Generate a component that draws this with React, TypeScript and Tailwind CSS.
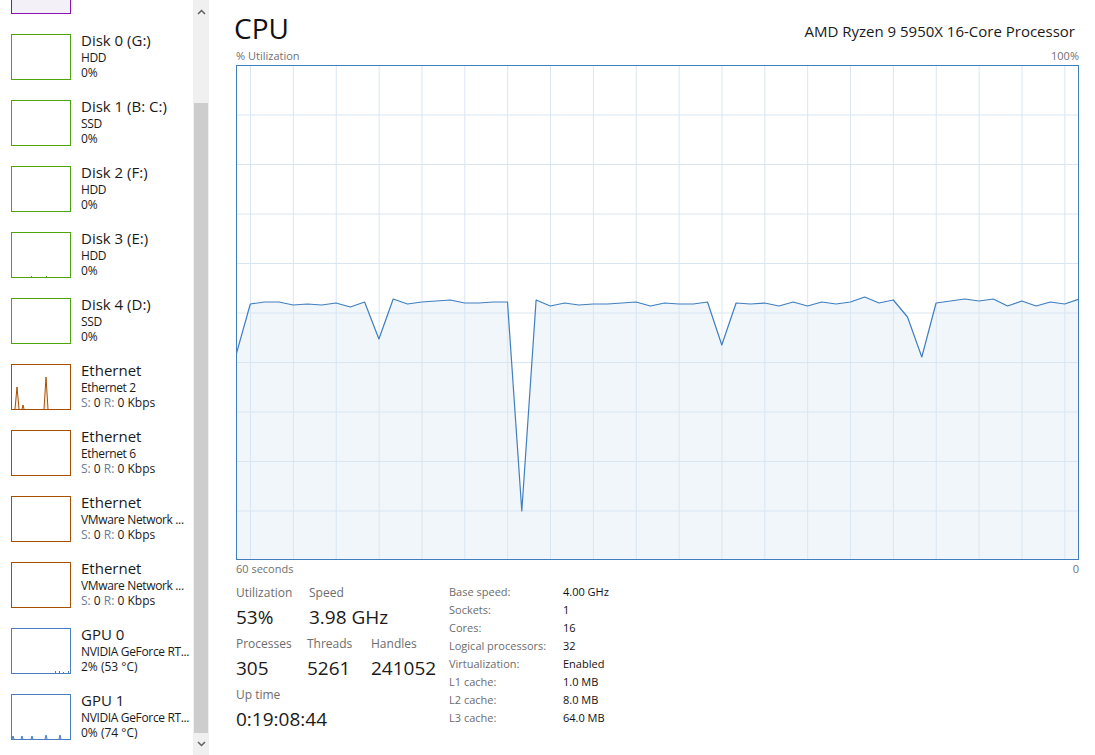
import React from "react";

const FONT = { fontFamily: '"Open Sans", "Noto Sans", sans-serif' };

// y values (screen px) sampled from the utilization graph, 60 points across
const CPU_Y = [
  355, 304, 302, 302, 305, 304, 305, 303, 307, 302,
  339, 299, 304, 302, 301, 300, 303, 303, 302, 302,
  511, 300, 306, 303, 305, 304, 304, 303, 302, 306,
  303, 304, 304, 302, 345, 303, 304, 303, 306, 302,
  306, 302, 304, 302, 297, 303, 300, 317, 357, 303,
  301, 299, 301, 299, 306, 301, 306, 302, 304, 299,
];

type Item = {
  title: string;
  sub: string;
  stat: React.ReactNode;
  color: string;
  fill?: string;
  spark?: React.ReactNode;
  noText?: boolean;
};

const kbps = (
  <>
    <span className="text-[#6b7a99]">S:</span> 0 <span className="text-[#6b7a99]">R:</span> 0 Kbps
  </>
);

const items: Item[] = [
  { title: "Memory", sub: "", stat: "", color: "#8b12ae", fill: "#f4f0f7", noText: true },
  { title: "Disk 0 (G:)", sub: "HDD", stat: "0%", color: "#4da60c" },
  { title: "Disk 1 (B: C:)", sub: "SSD", stat: "0%", color: "#4da60c" },
  { title: "Disk 2 (F:)", sub: "HDD", stat: "0%", color: "#4da60c" },
  {
    title: "Disk 3 (E:)",
    sub: "HDD",
    stat: "0%",
    color: "#4da60c",
    spark: (
      <>
        <rect x="19" y="43" width="1" height="1" fill="#4da60c" />
        <rect x="34" y="43" width="1" height="1" fill="#4da60c" />
      </>
    ),
  },
  { title: "Disk 4 (D:)", sub: "SSD", stat: "0%", color: "#4da60c" },
  {
    title: "Ethernet",
    sub: "Ethernet 2",
    stat: kbps,
    color: "#a74f01",
    spark: (
      <g fill="#fcefe2" stroke="#a74f01" strokeWidth="1">
        <polyline points="3,44 5,22 7,44" />
        <polyline points="10,44 11,40 12,44" />
        <polyline points="32,44 34,12 36,44" />
      </g>
    ),
  },
  { title: "Ethernet", sub: "Ethernet 6", stat: kbps, color: "#a74f01" },
  { title: "Ethernet", sub: "VMware Network ...", stat: kbps, color: "#a74f01" },
  { title: "Ethernet", sub: "VMware Network ...", stat: kbps, color: "#a74f01" },
  {
    title: "GPU 0",
    sub: "NVIDIA GeForce RT...",
    stat: "2% (53 °C)",
    color: "#4a7ebf",
    spark: (
      <g fill="#4a7ebf">
        <rect x="43" y="42" width="1" height="2" />
        <rect x="47" y="42" width="1" height="2" />
        <rect x="51" y="43" width="1" height="1" />
        <rect x="56" y="42" width="1" height="2" />
      </g>
    ),
  },
  {
    title: "GPU 1",
    sub: "NVIDIA GeForce RT...",
    stat: "0% (74 °C)",
    color: "#4a7ebf",
    spark: (
      <g fill="#c9dbef" stroke="#4a7ebf" strokeWidth="1">
        <polyline points="0,44 1,41 2,44" />
        <polyline points="9,44 10,41 11,44" />
        <polyline points="19,44 20,41 21,44" />
        <polyline points="33,44 34,40 35,44" />
        <polyline points="47,44 48,40 49,44" />
      </g>
    ),
  },
];

function SideItem({ item }: { item: Item }) {
  return (
    <div className="flex h-[66px] items-start pl-[11px] pt-[8px]">
      <div
        className="h-[46px] w-[60px] shrink-0 border"
        style={{ borderColor: item.color, background: item.fill ?? "#ffffff" }}
      >
        <svg width="58" height="44" viewBox="0 0 58 44" className="block">
          {item.spark}
        </svg>
      </div>
      {!item.noText && (
        <div className="-mt-[4px] ml-[10px] min-w-0 text-[#1a1a1a]">
          <div className="whitespace-nowrap text-[15px] leading-[20px]">{item.title}</div>
          <div className="whitespace-nowrap text-[12px] leading-[16px] tracking-[-0.35px]">{item.sub}</div>
          <div className="whitespace-nowrap text-[12px] leading-[14px]">{item.stat}</div>
        </div>
      )}
    </div>
  );
}

function Sidebar() {
  return (
    <div className="flex h-[755px] w-[209px] shrink-0">
      <div className="h-full w-[193px] overflow-hidden bg-white">
        <div className="-mt-[40px]">
          {items.map((it, i) => (
            <SideItem key={i} item={it} />
          ))}
        </div>
      </div>
      <div className="flex h-full w-[16px] flex-col bg-[#f0f0f0]">
        <div className="flex h-[24px] items-center justify-center">
          <svg width="9" height="6" viewBox="0 0 9 6">
            <polyline points="1,5 4.5,1.5 8,5" fill="none" stroke="#606060" strokeWidth="1.5" />
          </svg>
        </div>
        <div className="mx-[1px] mt-[79px] flex-1 bg-[#cdcdcd]" />
        <div className="flex h-[22px] items-center justify-center">
          <svg width="9" height="6" viewBox="0 0 9 6">
            <polyline points="1,1 4.5,4.5 8,1" fill="none" stroke="#606060" strokeWidth="1.5" />
          </svg>
        </div>
      </div>
    </div>
  );
}

function CpuChart() {
  const W = 843;
  const H = 494;
  const step = W / 59;
  const pts = CPU_Y.map((y, i) => `${(i * step).toFixed(1)},${y - 65}`);
  const line = pts.join(" ");
  const area = `0,${H} ${line} ${W},${H}`;
  const vLines = Array.from({ length: 20 }, (_, k) => 14 + k * 42.86);
  const hLines = Array.from({ length: 9 }, (_, k) => (k + 1) * 49.5);
  return (
    <svg width={W} height={H + 1} viewBox={`0 0 ${W} ${H + 1}`} className="block">
      <rect x="0" y="0" width={W} height={H + 1} fill="#ffffff" />
      <polygon points={area} fill="#f1f6fa" />
      {vLines.map((x, i) => (
        <line key={`v${i}`} x1={x + 0.5} y1="0" x2={x + 0.5} y2={H} stroke="#d9e6f2" strokeWidth="1" />
      ))}
      {hLines.map((y, i) => (
        <line key={`h${i}`} x1="0" y1={y + 0.5} x2={W} y2={y + 0.5} stroke="#d9e6f2" strokeWidth="1" />
      ))}
      <polyline points={line} fill="none" stroke="#3f7fc0" strokeWidth="1.2" strokeLinejoin="round" />
      <rect x="0.5" y="0.5" width={W - 1} height={H} fill="none" stroke="#3f7fc0" strokeWidth="1" />
    </svg>
  );
}

function Stat({ label, value, w }: { label: string; value: string; w: string }) {
  return (
    <div className={w}>
      <div className="text-[12px] leading-[16px] text-[#6d6d6d]">{label}</div>
      <div className="mt-[4px] whitespace-nowrap text-[19px] leading-[24px] text-[#1a1a1a]">{value}</div>
    </div>
  );
}

const specs: [string, string][] = [
  ["Base speed:", "4.00 GHz"],
  ["Sockets:", "1"],
  ["Cores:", "16"],
  ["Logical processors:", "32"],
  ["Virtualization:", "Enabled"],
  ["L1 cache:", "1.0 MB"],
  ["L2 cache:", "8.0 MB"],
  ["L3 cache:", "64.0 MB"],
];

export default function App() {
  return (
    <div className="flex h-[755px] w-[1095px] overflow-hidden bg-white" style={FONT}>
      <Sidebar />
      <div className="flex-1 pl-[27px] pr-[16px]">
        <div className="flex h-[48px] items-end justify-between">
          <div className="-ml-[2px] text-[28px] leading-[40px] text-[#111]">CPU</div>
          <div className="mb-[7px] mr-[4px] text-[15px] leading-[20px] text-[#1a1a1a]">
            AMD Ryzen 9 5950X 16-Core Processor
          </div>
        </div>
        <div className="mt-[1px] flex h-[15px] items-center justify-between text-[11px] text-[#707070]">
          <span>% Utilization</span>
          <span>100%</span>
        </div>
        <div className="mt-[1px]">
          <CpuChart />
        </div>
        <div className="mt-[2px] flex h-[14px] items-center justify-between text-[11px] text-[#707070]">
          <span>60 seconds</span>
          <span>0</span>
        </div>
        <div className="mt-[9px] flex">
          <div className="flex w-[213px] flex-col gap-[7px]">
            <div className="flex">
              <Stat label="Utilization" value="53%" w="w-[73px]" />
              <Stat label="Speed" value="3.98 GHz" w="w-[100px]" />
            </div>
            <div className="flex">
              <Stat label="Processes" value="305" w="w-[71px]" />
              <Stat label="Threads" value="5261" w="w-[64px]" />
              <Stat label="Handles" value="241052" w="w-[78px]" />
            </div>
            <div className="flex">
              <Stat label="Up time" value="0:19:08:44" w="w-[120px]" />
            </div>
          </div>
          <div className="-mt-[2px] flex flex-col text-[11px] leading-[18px]">
            {specs.map(([k, v]) => (
              <div key={k} className="flex">
                <span className="w-[114px] text-[#6d6d6d]">{k}</span>
                <span className="text-[#111]">{v}</span>
              </div>
            ))}
          </div>
        </div>
      </div>
    </div>
  );
}
